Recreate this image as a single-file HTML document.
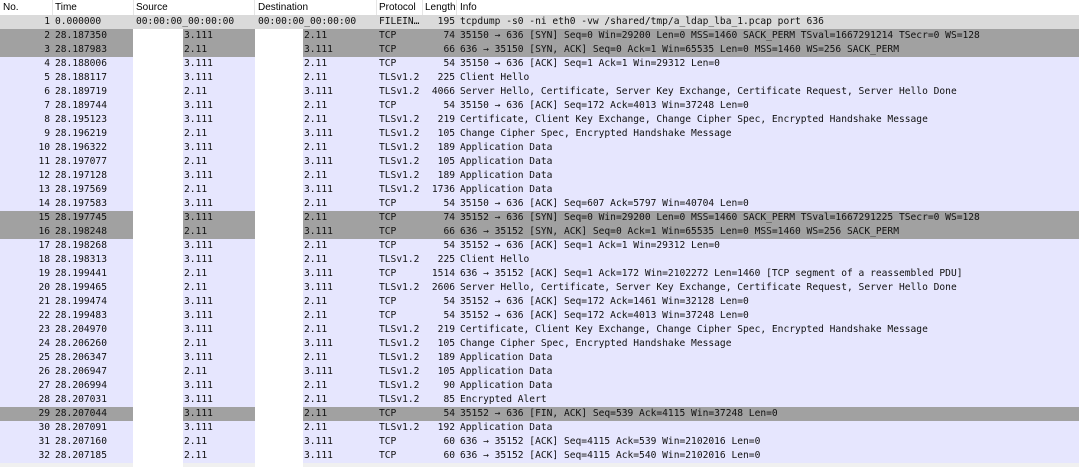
<!DOCTYPE html>
<html><head><meta charset="utf-8"><style>
body{margin:0;width:1079px;height:467px;overflow:hidden;background:#f0f0f0;position:relative}
.h{position:absolute;left:0;top:0;width:1079px;height:15px;background:#fff;border-bottom:1px solid #e5e5e5;font:10px "Liberation Sans",sans-serif;color:#000}
.h span{position:absolute;top:2px}
.h i{position:absolute;top:0;width:1px;height:15px;background:#e5e5e5}
.r{position:absolute;left:0;width:1079px;height:14px;background:#e6e6fe;font:9.6px "DejaVu Sans Mono","Liberation Mono",monospace;color:#111;white-space:pre;line-height:14px}
.r.g{background:#a1a1a1}.r.f{background:#dadada}
.r span{position:absolute;top:0}
.n{right:1029px}.t{left:55px}.s{left:136px}.d{left:258px}.p{left:379px}.l{right:624px}.i{left:460px}
.r .s2{left:184px}.r .d2{left:304px}
.w{position:absolute;top:29px;height:438px;background:#fff}
</style></head><body>
<div class="h"><span style="left:3px">No.</span><span style="left:55px">Time</span><span style="left:136px">Source</span><span style="left:258px">Destination</span><span style="left:379px">Protocol</span><span style="left:425px">Length</span><span style="left:460px">Info</span>
<i style="left:52px"></i><i style="left:133px"></i><i style="left:254px"></i><i style="left:376px"></i><i style="left:422px"></i><i style="left:456px"></i></div>
<div class="r f" style="top:15px"><span class="n">1</span><span class="t">0.000000</span><span class="s">00:00:00_00:00:00</span><span class="d">00:00:00_00:00:00</span><span class="p">FILEIN…</span><span class="l">195</span><span class="i">tcpdump -s0 -ni eth0 -vw /shared/tmp/a_ldap_lba_1.pcap port 636</span></div>
<div class="r g" style="top:29px"><span class="n">2</span><span class="t">28.187350</span><span class="s2">3.111</span><span class="d2">2.11</span><span class="p">TCP</span><span class="l">74</span><span class="i">35150 → 636 [SYN] Seq=0 Win=29200 Len=0 MSS=1460 SACK_PERM TSval=1667291214 TSecr=0 WS=128</span></div>
<div class="r g" style="top:43px"><span class="n">3</span><span class="t">28.187983</span><span class="s2">2.11</span><span class="d2">3.111</span><span class="p">TCP</span><span class="l">66</span><span class="i">636 → 35150 [SYN, ACK] Seq=0 Ack=1 Win=65535 Len=0 MSS=1460 WS=256 SACK_PERM</span></div>
<div class="r" style="top:57px"><span class="n">4</span><span class="t">28.188006</span><span class="s2">3.111</span><span class="d2">2.11</span><span class="p">TCP</span><span class="l">54</span><span class="i">35150 → 636 [ACK] Seq=1 Ack=1 Win=29312 Len=0</span></div>
<div class="r" style="top:71px"><span class="n">5</span><span class="t">28.188117</span><span class="s2">3.111</span><span class="d2">2.11</span><span class="p">TLSv1.2</span><span class="l">225</span><span class="i">Client Hello</span></div>
<div class="r" style="top:85px"><span class="n">6</span><span class="t">28.189719</span><span class="s2">2.11</span><span class="d2">3.111</span><span class="p">TLSv1.2</span><span class="l">4066</span><span class="i">Server Hello, Certificate, Server Key Exchange, Certificate Request, Server Hello Done</span></div>
<div class="r" style="top:99px"><span class="n">7</span><span class="t">28.189744</span><span class="s2">3.111</span><span class="d2">2.11</span><span class="p">TCP</span><span class="l">54</span><span class="i">35150 → 636 [ACK] Seq=172 Ack=4013 Win=37248 Len=0</span></div>
<div class="r" style="top:113px"><span class="n">8</span><span class="t">28.195123</span><span class="s2">3.111</span><span class="d2">2.11</span><span class="p">TLSv1.2</span><span class="l">219</span><span class="i">Certificate, Client Key Exchange, Change Cipher Spec, Encrypted Handshake Message</span></div>
<div class="r" style="top:127px"><span class="n">9</span><span class="t">28.196219</span><span class="s2">2.11</span><span class="d2">3.111</span><span class="p">TLSv1.2</span><span class="l">105</span><span class="i">Change Cipher Spec, Encrypted Handshake Message</span></div>
<div class="r" style="top:141px"><span class="n">10</span><span class="t">28.196322</span><span class="s2">3.111</span><span class="d2">2.11</span><span class="p">TLSv1.2</span><span class="l">189</span><span class="i">Application Data</span></div>
<div class="r" style="top:155px"><span class="n">11</span><span class="t">28.197077</span><span class="s2">2.11</span><span class="d2">3.111</span><span class="p">TLSv1.2</span><span class="l">105</span><span class="i">Application Data</span></div>
<div class="r" style="top:169px"><span class="n">12</span><span class="t">28.197128</span><span class="s2">3.111</span><span class="d2">2.11</span><span class="p">TLSv1.2</span><span class="l">189</span><span class="i">Application Data</span></div>
<div class="r" style="top:183px"><span class="n">13</span><span class="t">28.197569</span><span class="s2">2.11</span><span class="d2">3.111</span><span class="p">TLSv1.2</span><span class="l">1736</span><span class="i">Application Data</span></div>
<div class="r" style="top:197px"><span class="n">14</span><span class="t">28.197583</span><span class="s2">3.111</span><span class="d2">2.11</span><span class="p">TCP</span><span class="l">54</span><span class="i">35150 → 636 [ACK] Seq=607 Ack=5797 Win=40704 Len=0</span></div>
<div class="r g" style="top:211px"><span class="n">15</span><span class="t">28.197745</span><span class="s2">3.111</span><span class="d2">2.11</span><span class="p">TCP</span><span class="l">74</span><span class="i">35152 → 636 [SYN] Seq=0 Win=29200 Len=0 MSS=1460 SACK_PERM TSval=1667291225 TSecr=0 WS=128</span></div>
<div class="r g" style="top:225px"><span class="n">16</span><span class="t">28.198248</span><span class="s2">2.11</span><span class="d2">3.111</span><span class="p">TCP</span><span class="l">66</span><span class="i">636 → 35152 [SYN, ACK] Seq=0 Ack=1 Win=65535 Len=0 MSS=1460 WS=256 SACK_PERM</span></div>
<div class="r" style="top:239px"><span class="n">17</span><span class="t">28.198268</span><span class="s2">3.111</span><span class="d2">2.11</span><span class="p">TCP</span><span class="l">54</span><span class="i">35152 → 636 [ACK] Seq=1 Ack=1 Win=29312 Len=0</span></div>
<div class="r" style="top:253px"><span class="n">18</span><span class="t">28.198313</span><span class="s2">3.111</span><span class="d2">2.11</span><span class="p">TLSv1.2</span><span class="l">225</span><span class="i">Client Hello</span></div>
<div class="r" style="top:267px"><span class="n">19</span><span class="t">28.199441</span><span class="s2">2.11</span><span class="d2">3.111</span><span class="p">TCP</span><span class="l">1514</span><span class="i">636 → 35152 [ACK] Seq=1 Ack=172 Win=2102272 Len=1460 [TCP segment of a reassembled PDU]</span></div>
<div class="r" style="top:281px"><span class="n">20</span><span class="t">28.199465</span><span class="s2">2.11</span><span class="d2">3.111</span><span class="p">TLSv1.2</span><span class="l">2606</span><span class="i">Server Hello, Certificate, Server Key Exchange, Certificate Request, Server Hello Done</span></div>
<div class="r" style="top:295px"><span class="n">21</span><span class="t">28.199474</span><span class="s2">3.111</span><span class="d2">2.11</span><span class="p">TCP</span><span class="l">54</span><span class="i">35152 → 636 [ACK] Seq=172 Ack=1461 Win=32128 Len=0</span></div>
<div class="r" style="top:309px"><span class="n">22</span><span class="t">28.199483</span><span class="s2">3.111</span><span class="d2">2.11</span><span class="p">TCP</span><span class="l">54</span><span class="i">35152 → 636 [ACK] Seq=172 Ack=4013 Win=37248 Len=0</span></div>
<div class="r" style="top:323px"><span class="n">23</span><span class="t">28.204970</span><span class="s2">3.111</span><span class="d2">2.11</span><span class="p">TLSv1.2</span><span class="l">219</span><span class="i">Certificate, Client Key Exchange, Change Cipher Spec, Encrypted Handshake Message</span></div>
<div class="r" style="top:337px"><span class="n">24</span><span class="t">28.206260</span><span class="s2">2.11</span><span class="d2">3.111</span><span class="p">TLSv1.2</span><span class="l">105</span><span class="i">Change Cipher Spec, Encrypted Handshake Message</span></div>
<div class="r" style="top:351px"><span class="n">25</span><span class="t">28.206347</span><span class="s2">3.111</span><span class="d2">2.11</span><span class="p">TLSv1.2</span><span class="l">189</span><span class="i">Application Data</span></div>
<div class="r" style="top:365px"><span class="n">26</span><span class="t">28.206947</span><span class="s2">2.11</span><span class="d2">3.111</span><span class="p">TLSv1.2</span><span class="l">105</span><span class="i">Application Data</span></div>
<div class="r" style="top:379px"><span class="n">27</span><span class="t">28.206994</span><span class="s2">3.111</span><span class="d2">2.11</span><span class="p">TLSv1.2</span><span class="l">90</span><span class="i">Application Data</span></div>
<div class="r" style="top:393px"><span class="n">28</span><span class="t">28.207031</span><span class="s2">3.111</span><span class="d2">2.11</span><span class="p">TLSv1.2</span><span class="l">85</span><span class="i">Encrypted Alert</span></div>
<div class="r g" style="top:407px"><span class="n">29</span><span class="t">28.207044</span><span class="s2">3.111</span><span class="d2">2.11</span><span class="p">TCP</span><span class="l">54</span><span class="i">35152 → 636 [FIN, ACK] Seq=539 Ack=4115 Win=37248 Len=0</span></div>
<div class="r" style="top:421px"><span class="n">30</span><span class="t">28.207091</span><span class="s2">3.111</span><span class="d2">2.11</span><span class="p">TLSv1.2</span><span class="l">192</span><span class="i">Application Data</span></div>
<div class="r" style="top:435px"><span class="n">31</span><span class="t">28.207160</span><span class="s2">2.11</span><span class="d2">3.111</span><span class="p">TCP</span><span class="l">60</span><span class="i">636 → 35152 [ACK] Seq=4115 Ack=539 Win=2102016 Len=0</span></div>
<div class="r" style="top:449px"><span class="n">32</span><span class="t">28.207185</span><span class="s2">2.11</span><span class="d2">3.111</span><span class="p">TCP</span><span class="l">60</span><span class="i">636 → 35152 [ACK] Seq=4115 Ack=540 Win=2102016 Len=0</span></div>
<div class="w" style="left:133px;width:50px"></div>
<div class="w" style="left:255px;width:48px"></div>
</body></html>
